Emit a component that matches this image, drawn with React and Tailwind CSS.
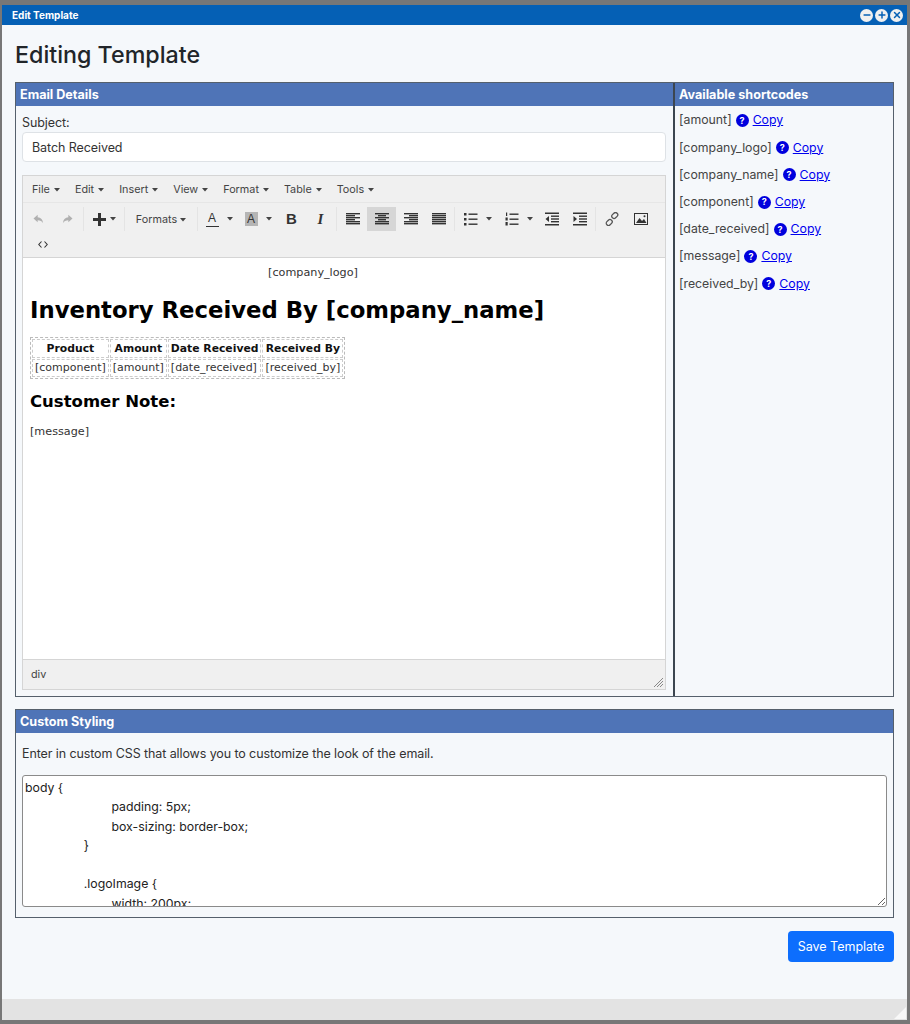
import { Plus, Minus, X } from "lucide-react"

const sans = "font-['Inter','Noto_Sans',sans-serif]"

const shortcodes = ["amount", "company_logo", "company_name", "component", "date_received", "message", "received_by"]
const menus = ["File", "Edit", "Insert", "View", "Format", "Table", "Tools"]

const cssText = `body {
                         padding: 5px;
                         box-sizing: border-box;
                 }

                 .logoImage {
                         width: 200px;
                 }`

const Caret = () => (
  <svg width="6" height="3.500" viewBox="0 0 7 4" className="shrink-0">
    <path d="M0 0h7L3.500 4z" fill="#444" />
  </svg>
)

const Lines = ({ rows }) => (
  <svg width="14" height="14" viewBox="0 0 14 14" fill="#333">
    {rows.map((r, i) => (
      <rect key={i} x={r[0]} y={i * 2 + 1} width={r[1]} height="1.400" />
    ))}
  </svg>
)

const Sep = () => <div className="w-px h-[24px] bg-[#e4e4e4] mx-[1px] shrink-0" />

const Btn = ({ w, active, children }) => (
  <div className={`${w} h-[24px] flex items-center justify-center gap-[8px] shrink-0 ${active ? "bg-[#d6d6d6]" : ""}`}>
    {children}
  </div>
)

const SectionHead = ({ children }) => (
  <div className={`h-[23px] bg-[#4f74b7] px-[4px] pt-[2px] flex items-center text-[12.6px] font-bold text-white ${sans}`}>{children}</div>
)

const Toolbar = () => (
  <div className="h-[55px] border-b border-[#d5d5d5] pl-[1px] pt-[4px]">
    <div className="flex items-center h-[24px]">
      <Btn w="w-[29px]">
        <svg width="11" height="10" viewBox="0 0 13 12" fill="#b0b0b0"><path d="M5.500 1 0.500 5.500l5 4.500V7.400c3 0 5 .9 6.500 3.600-.3-4-2.600-6.500-6.500-7z" /></svg>
      </Btn>
      <Btn w="w-[29px]">
        <svg width="11" height="10" viewBox="0 0 13 12" fill="#b0b0b0"><path d="M7.500 1l5 4.500-5 4.500V7.400c-3 0-5 .9-6.500 3.600.3-4 2.600-6.500 6.500-7z" /></svg>
      </Btn>
      <Sep />
      <Btn w="w-[38px]">
        <svg width="13" height="13" viewBox="0 0 13 13" fill="#333"><path d="M5 0h3v5h5v3H8v5H5V8H0V5h5z" /></svg>
        <span className="-ml-[4px]"><Caret /></span>
      </Btn>
      <Sep />
      <div className={`w-[70px] h-[24px] pt-[2px] flex items-center justify-center gap-[3px] text-[10.800px] text-[#444] shrink-0 ${sans}`}>
        Formats <Caret />
      </div>
      <Sep />
      <Btn w="w-[40px]">
        <span className="relative w-[13px] h-[16px] text-[12px] leading-[14px] text-center text-[#333] font-['Liberation_Sans',sans-serif]">
          A
          <span className="absolute left-0 right-0 bottom-0 h-[1px] bg-[#333]" />
        </span>
        <Caret />
      </Btn>
      <Btn w="w-[38px]">
        <span className="w-[13px] h-[14px] bg-[#b5b5b5] text-[12px] leading-[14px] text-center text-[#333] font-['Liberation_Sans',sans-serif]">A</span>
        <Caret />
      </Btn>
      <Btn w="w-[29px]">
        <span className="text-[15px] font-bold text-[#333] font-['Liberation_Sans',sans-serif]">B</span>
      </Btn>
      <Btn w="w-[29px]">
        <span className="text-[15px] font-bold italic text-[#333] font-['Liberation_Serif',serif]">I</span>
      </Btn>
      <Sep />
      <Btn w="w-[29px]"><Lines rows={[[0, 14], [0, 9], [0, 14], [0, 9], [0, 14], [0, 14]]} /></Btn>
      <Btn w="w-[29px]" active><Lines rows={[[0, 14], [3, 8], [0, 14], [3, 8], [0, 14], [0, 14]]} /></Btn>
      <Btn w="w-[29px]"><Lines rows={[[0, 14], [5, 9], [0, 14], [5, 9], [0, 14], [0, 14]]} /></Btn>
      <Btn w="w-[28px]"><Lines rows={[[0, 14], [0, 14], [0, 14], [0, 14], [0, 14], [0, 14]]} /></Btn>
      <Sep />
      <Btn w="w-[44px]">
        <svg width="14" height="14" viewBox="0 0 14 14" fill="#333">
          <rect x="0" y="1" width="2.500" height="2.500" /><rect x="0" y="6" width="2.500" height="2.500" /><rect x="0" y="11" width="2.500" height="2.500" />
          <rect x="4.500" y="1.500" width="9" height="1.400" /><rect x="4.500" y="6.500" width="9" height="1.400" /><rect x="4.500" y="11.500" width="9" height="1.400" />
        </svg>
        <Caret />
      </Btn>
      <Btn w="w-[37px]">
        <svg width="14" height="14" viewBox="0 0 14 14" fill="#333">
          <rect x="1" y="0.500" width="1.200" height="3.500" /><rect x="0.500" y="5.500" width="2.200" height="3" /><rect x="0.500" y="10" width="2.200" height="3.500" />
          <rect x="4.500" y="1.500" width="9" height="1.400" /><rect x="4.500" y="6.500" width="9" height="1.400" /><rect x="4.500" y="11.500" width="9" height="1.400" />
        </svg>
        <Caret />
      </Btn>
      <Btn w="w-[29px]">
        <svg width="14" height="14" viewBox="0 0 14 14" fill="#333">
          <rect x="0" y="0.500" width="14" height="1.500" /><rect x="6" y="3.500" width="8" height="1.400" /><rect x="6" y="6.300" width="8" height="1.400" /><rect x="6" y="9" width="8" height="1.400" /><rect x="0" y="12" width="14" height="1.500" />
          <path d="M4 4v6L0.500 7z" />
        </svg>
      </Btn>
      <Btn w="w-[28px]">
        <svg width="14" height="14" viewBox="0 0 14 14" fill="#333">
          <rect x="0" y="0.500" width="14" height="1.500" /><rect x="6" y="3.500" width="8" height="1.400" /><rect x="6" y="6.300" width="8" height="1.400" /><rect x="6" y="9" width="8" height="1.400" /><rect x="0" y="12" width="14" height="1.500" />
          <path d="M0.500 4v6L4 7z" />
        </svg>
      </Btn>
      <Sep />
      <Btn w="w-[29px]">
        <svg width="14" height="14" viewBox="0 0 14 14" fill="none" stroke="#555" strokeWidth="1.300">
          <rect x="7.500" y="0.200" width="4.500" height="6.500" rx="2.200" transform="rotate(45 9.700 3.500)" />
          <rect x="2" y="7.300" width="4.500" height="6.500" rx="2.200" transform="rotate(45 4.300 10.500)" />
        </svg>
      </Btn>
      <Btn w="w-[29px]">
        <svg width="14" height="12" viewBox="0 0 14 12" fill="#333">
          <path fillRule="evenodd" d="M0 0h14v12H0zM1 1v10h12V1z" />
          <path d="M2 10l3.500-5 2.500 3 2-2 2.500 4z" />
          <circle cx="10.500" cy="3.300" r="1" />
        </svg>
      </Btn>
    </div>
    <div className="flex items-center h-[24px] mt-[1px]">
      <Btn w="w-[37px]">
        <svg width="10" height="7" viewBox="0 0 10 7" fill="none" stroke="#333" strokeWidth="1.100">
          <path d="M3.500 0.500 0.800 3.500l2.700 3M6.500 0.500l2.700 3-2.700 3" />
        </svg>
      </Btn>
    </div>
  </div>
)

const Editor = () => (
  <div className="mt-[13px] border border-[#d5d5d5] bg-[#f0f0f0] flex flex-col h-[515px]">
    <div className="h-[27px] pt-[2px] flex items-center pl-[9px] gap-[15px] border-b border-[#e6e6e6]">
      {menus.map((m) => (
        <span key={m} className={`flex items-center gap-[4px] text-[10.800px] text-[#444] ${sans}`}>
          {m} <Caret />
        </span>
      ))}
    </div>
    <Toolbar />
    <div className="flex-1 bg-white px-[7px] text-[#111] font-['DejaVu_Sans',sans-serif] text-[11.2px]">
      <div className="w-[566px] text-center pt-[7px] leading-[16px] text-[#333]">[company_logo]</div>
      <h1 className="text-[22.750px] font-bold leading-[28px] mt-[15px] text-black">Inventory Received By [company_name]</h1>
      <table className="mt-[13px] border border-dashed border-[#bbb] border-separate border-spacing-[1px] text-[11px] leading-[16px]">
        <tbody>
          <tr className="text-[10.800px]">
            <th className="border border-dashed border-[#ccc] px-[2px] pt-[1px]">Product</th>
            <th className="border border-dashed border-[#ccc] px-[2px] pt-[1px]">Amount</th>
            <th className="border border-dashed border-[#ccc] px-[2px] pt-[1px]">Date Received</th>
            <th className="border border-dashed border-[#ccc] px-[2px] pt-[1px]">Received By</th>
          </tr>
          <tr className="text-[#333]">
            <td className="border border-dashed border-[#ccc] px-[2px]">[component]</td>
            <td className="border border-dashed border-[#ccc] px-[2px]">[amount]</td>
            <td className="border border-dashed border-[#ccc] px-[2px]">[date_received]</td>
            <td className="border border-dashed border-[#ccc] px-[2px]">[received_by]</td>
          </tr>
        </tbody>
      </table>
      <h2 className="text-[16.500px] font-bold leading-[22px] mt-[12px] text-black">Customer Note:</h2>
      <p className="mt-[11px] leading-[16px] text-[#333]">[message]</p>
    </div>
    <div className={`h-[30px] pt-[2px] border-t border-[#d5d5d5] relative flex items-center pl-[8px] text-[10.800px] text-[#444] ${sans}`}>
      div
      <svg width="9" height="9" viewBox="0 0 9 9" className="absolute right-[2px] bottom-[2px]" stroke="#888" strokeWidth="1">
        <path d="M0 9 9 0M3 9l6-6M6 9l3-3" />
      </svg>
    </div>
  </div>
)

const App = () => {
  return (
    <div className="w-[910px] h-[1024px] bg-[#777777] pt-[5px] pl-[2px] pr-[3px] pb-[4px] overflow-hidden">
      <div className={`h-full flex flex-col bg-[#f5f8fb] ${sans}`}>
        {/* Title bar */}
        <div className="h-[20px] bg-[#0560b5] flex items-center justify-between pl-[10px] pr-[4px] shrink-0">
          <span className="text-[10px] font-bold text-white">Edit Template</span>
          <div className="flex items-center gap-[2px]">
            <span className="size-[13px] rounded-full bg-[#f0f0f0] flex items-center justify-center"><Minus size={10} strokeWidth={3.500} color="#0560b5" /></span>
            <span className="size-[13px] rounded-full bg-[#f0f0f0] flex items-center justify-center"><Plus size={10} strokeWidth={3.500} color="#0560b5" /></span>
            <span className="size-[13px] rounded-full bg-[#f0f0f0] flex items-center justify-center"><X size={10} strokeWidth={3.500} color="#0560b5" /></span>
          </div>
        </div>

        <div className="flex-1 px-[13px]">
          <h1 className="text-[23.250px] font-medium leading-[29px] mt-[15px] text-[#212529]">Editing Template</h1>

          {/* Email details and shortcodes */}
          <div className="mt-[13px] h-[615px] flex border border-[#55606c]">
            <div className="w-[657px] shrink-0 flex flex-col">
              <SectionHead>Email Details</SectionHead>
              <div className="pl-[6px] pr-[7px]">
                <div className="mt-[8px] text-[12.500px] tracking-[-0.080px] leading-[18px] text-[#333]">Subject:</div>
                <div className="h-[30px] bg-white border border-[#dee2e6] rounded-[4px] px-[9px] pt-[2px] flex items-center text-[12.500px] tracking-[-0.080px] text-[#333]">Batch Received</div>
                <Editor />
              </div>
            </div>
            <div className="flex-1 border-l-2 border-[#3c4650] flex flex-col">
              <SectionHead>Available shortcodes</SectionHead>
              <div className="px-[4px] pt-[1px]">
                {shortcodes.map((s) => (
                  <div key={s} className="h-[27.200px] flex items-center gap-[4px] text-[12.300px] text-[#444]">
                    <span>[{s}]</span>
                    <span className="size-[13px] rounded-full bg-[#0000dd] text-white text-[9px] font-bold flex items-center justify-center">?</span>
                    <a className="text-[#0000ee] underline">Copy</a>
                  </div>
                ))}
              </div>
            </div>
          </div>

          {/* Custom styling */}
          <div className="mt-[12px] h-[209px] border border-[#55606c] flex flex-col">
            <SectionHead>Custom Styling</SectionHead>
            <p className="px-[6px] mt-[12px] text-[12.500px] tracking-[-0.100px] leading-[18px] text-[#333]">Enter in custom CSS that allows you to customize the look of the email.</p>
            <div className="px-[6px] mt-[12px]">
              <textarea
                readOnly
                defaultValue={cssText}
                className="block w-full h-[132px] bg-white border border-[#8a8a8a] rounded-[3px] px-[2px] pt-[2px] text-[12.300px] leading-[19.250px] text-[#222] overflow-hidden resize-y outline-none"
              />
            </div>
          </div>

          <div className="mt-[13px] flex justify-end">
            <button className="w-[106px] h-[31px] pt-[1px] rounded-[4px] bg-[#0d6efd] text-white text-[12.500px]">Save Template</button>
          </div>
        </div>

        {/* Footer */}
        <div className="h-[21px] bg-[#e3e3e3] shrink-0 relative">
          <svg width="12" height="12" viewBox="0 0 12 12" className="absolute right-[1px] bottom-[1px]">
            <path d="M12 0v12H0z" fill="#f8f8f8" />
          </svg>
        </div>
      </div>
    </div>
  )
}

export default App
